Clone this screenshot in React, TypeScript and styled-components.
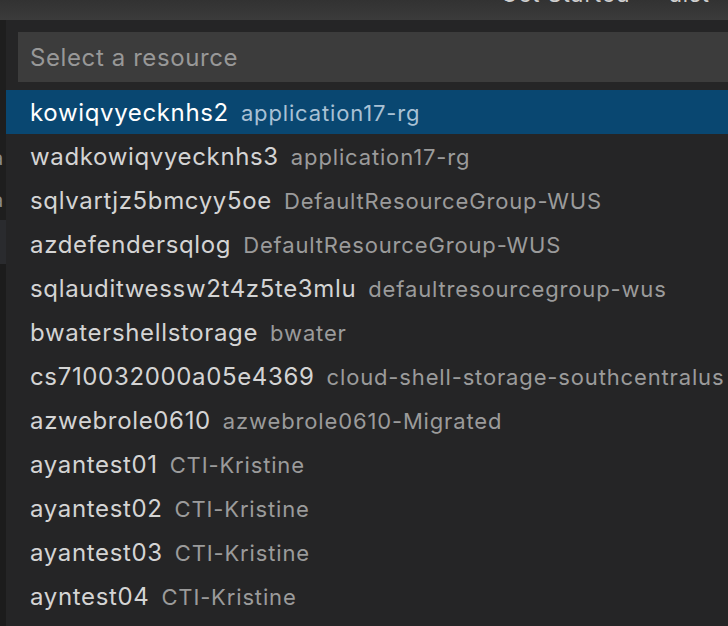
import React from "react";
import styled, { createGlobalStyle } from "styled-components";

const Global = createGlobalStyle`
  html, body { margin: 0; padding: 0; background: #1e1e1e; }
  body { font-family: Inter, "Noto Sans", sans-serif; overflow: hidden; }
  #root { width: 728px; height: 626px; }
`;

const Page = styled.div`
  width: 728px;
  height: 626px;
  display: flex;
  flex-direction: column;
  background: #1e1e1e;
  overflow: hidden;
`;

const TitleBar = styled.div`
  height: 20px;
  flex: none;
  background: linear-gradient(#323232, #3b3b3b);
  display: flex;
  align-items: flex-end;
  justify-content: flex-end;
  gap: 38px;
  padding-right: 18px;
  overflow: hidden;
`;

const TabTitle = styled.span`
  color: #cfcfcf;
  font-size: 22px;
  line-height: 22px;
  margin-bottom: 15px;
  letter-spacing: 1px;
`;

const Body = styled.div`
  flex: 1;
  display: flex;
  min-height: 0;
`;

const Gutter = styled.div`
  width: 6px;
  flex: none;
  display: flex;
  flex-direction: column;
  background: #1e1e1e;
  overflow: hidden;
`;

const GutterLine = styled.div<{ $h: number; $bg?: string }>`
  height: ${(p) => p.$h}px;
  flex: none;
  background: ${(p) => p.$bg || "transparent"};
  color: #8a8a8a;
  font-size: 20px;
  line-height: ${(p) => p.$h}px;
  text-indent: -8px;
  overflow: hidden;
`;

const Picker = styled.div`
  flex: 1;
  background: #252526;
  display: flex;
  flex-direction: column;
  padding-top: 12px;
  min-width: 0;
`;

const InputBox = styled.div`
  margin-left: 12px;
  height: 50px;
  flex: none;
  background: #3c3c3c;
  display: flex;
  align-items: center;
  padding-left: 12px;
  color: #989898;
  font-size: 24px;
  letter-spacing: 0.6px;
`;

const List = styled.div`
  margin-top: 8px;
  display: flex;
  flex-direction: column;
`;

const Row = styled.div<{ $selected?: boolean }>`
  height: 44px;
  display: flex;
  align-items: center;
  padding-left: 24px;
  gap: 12px;
  padding-top: 1px;
  box-sizing: border-box;
  white-space: nowrap;
  overflow: hidden;
  background: ${(p) => (p.$selected ? "#094771" : "transparent")};
`;

const Label = styled.span<{ $selected?: boolean }>`
  font-size: 24px;
  letter-spacing: 0.65px;
  color: ${(p) => (p.$selected ? "#ffffff" : "#d4d4d4")};
`;

const Desc = styled.span<{ $selected?: boolean }>`
  font-size: 22px;
  letter-spacing: 0.85px;
  color: ${(p) => (p.$selected ? "#a9c1d5" : "#9b9b9b")};
`;

const items: [string, string][] = [
  ["kowiqvyecknhs2", "application17-rg"],
  ["wadkowiqvyecknhs3", "application17-rg"],
  ["sqlvartjz5bmcyy5oe", "DefaultResourceGroup-WUS"],
  ["azdefendersqlog", "DefaultResourceGroup-WUS"],
  ["sqlauditwessw2t4z5te3mlu", "defaultresourcegroup-wus"],
  ["bwatershellstorage", "bwater"],
  ["cs710032000a05e4369", "cloud-shell-storage-southcentralus"],
  ["azwebrole0610", "azwebrole0610-Migrated"],
  ["ayantest01", "CTI-Kristine"],
  ["ayantest02", "CTI-Kristine"],
  ["ayantest03", "CTI-Kristine"],
  ["ayntest04", "CTI-Kristine"],
];

export default function App() {
  return (
    <Page>
      <Global />
      <TitleBar>
        <TabTitle>Get Started</TabTitle>
        <TabTitle>dist</TabTitle>
      </TitleBar>
      <Body>
        <Gutter>
          <GutterLine $h={116} />
          <GutterLine $h={44}>a</GutterLine>
          <GutterLine $h={40}>a</GutterLine>
          <GutterLine $h={44} $bg="#2a2b2e" />
          <GutterLine $h={400} $bg="#1c1c1c" />
        </Gutter>
        <Picker>
          <InputBox>Select a resource</InputBox>
          <List>
            {items.map(([l, d], i) => (
              <Row key={l} $selected={i === 0}>
                <Label $selected={i === 0}>{l}</Label>
                <Desc $selected={i === 0}>{d}</Desc>
              </Row>
            ))}
          </List>
        </Picker>
      </Body>
    </Page>
  );
}
